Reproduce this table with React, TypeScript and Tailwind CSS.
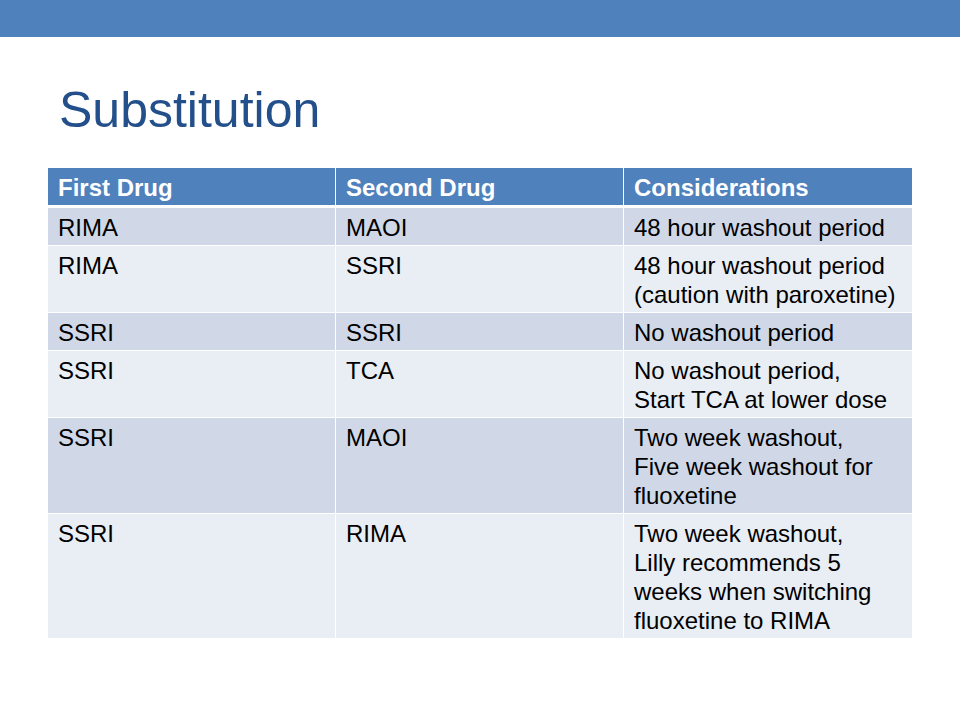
import React from 'react';

const rows: [string, string, string[]][] = [
  ['RIMA', 'MAOI', ['48 hour washout period']],
  ['RIMA', 'SSRI', ['48 hour washout period', '(caution with paroxetine)']],
  ['SSRI', 'SSRI', ['No washout period']],
  ['SSRI', 'TCA', ['No washout period,', 'Start TCA at lower dose']],
  ['SSRI', 'MAOI', ['Two week washout,', 'Five week washout for', 'fluoxetine']],
  ['SSRI', 'RIMA', ['Two week washout,', 'Lilly recommends 5', 'weeks when switching', 'fluoxetine to RIMA']],
];

const App = () => {
  return (
    <div className="w-[960px] h-[720px] bg-white overflow-hidden" style={{ fontFamily: '"Liberation Sans", Arial, sans-serif' }}>
      <div className="h-[37px] bg-[#4f81bd]" />

      <h1 className="pl-[59px] pt-[48px] text-[50px] leading-none text-[#23508a]">Substitution</h1>

      <div className="ml-[48px] mt-[33px] w-[864px] flex flex-col gap-[1px]">
        {/* header */}
        <div className="grid grid-cols-[287px_287px_288px] gap-x-[1px] mb-[2px]">
          {['First Drug', 'Second Drug', 'Considerations'].map((h) => (
            <div key={h} className="bg-[#4f81bd] text-white font-bold text-[24px] leading-[29px] pl-[10px] pt-[5px] pb-[3px]">
              {h}
            </div>
          ))}
        </div>

        {rows.map((r, i) => {
          const bg = i % 2 === 0 ? 'bg-[#d0d8e8]' : 'bg-[#e9edf4]';
          return (
            <div key={i} className="grid grid-cols-[287px_287px_288px] gap-x-[1px] text-[24px] leading-[29px] text-black">
              <div className={`${bg} pl-[10px] pt-[5px] pb-[3px]`}>{r[0]}</div>
              <div className={`${bg} pl-[10px] pt-[5px] pb-[3px]`}>{r[1]}</div>
              <div className={`${bg} pl-[10px] pt-[5px] pb-[3px]`}>
                {r[2].map((line) => (
                  <div key={line}>{line}</div>
                ))}
              </div>
            </div>
          );
        })}
      </div>
    </div>
  );
};

export default App;
